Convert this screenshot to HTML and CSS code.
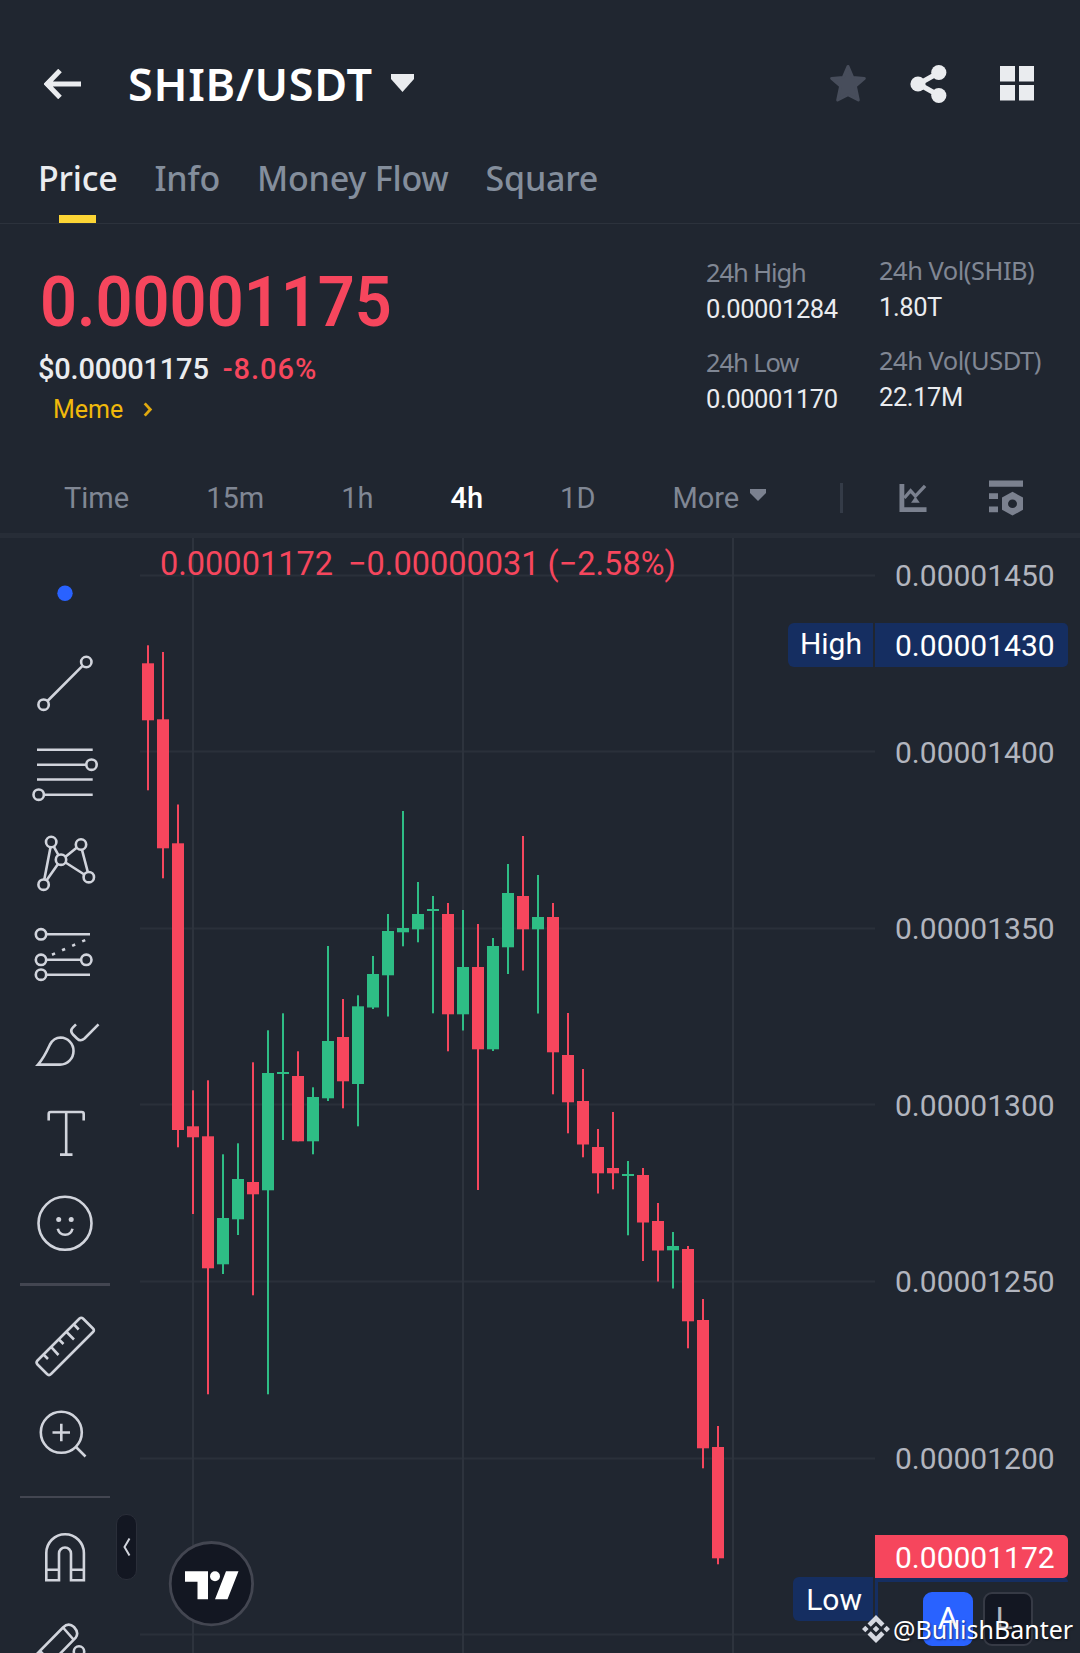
FILE: index.html
```
<!DOCTYPE html>
<html lang="en">
<head>
    <meta charset="UTF-8">
    <meta name="viewport" content="width=device-width, initial-scale=1.0">
    <title>SHIB/USDT</title>
    <link rel="stylesheet" href="styles.css">
</head>
<body>
    <header class="header">
        <svg class="back" width="37" height="30" viewBox="0 0 37 30"><path d="M16 1.500 3 15l13 13.500M4 15h33" fill="none" stroke="#eaecef" stroke-width="5"/><path d="M0 15 7 8v14z" fill="#eaecef"/></svg>
        <h1>SHIB/USDT</h1>
        <svg class="caret" width="24" height="19" viewBox="0 0 24 19"><path d="M0 0h23v5L11.500 18 0 5z" fill="#eaecef"/></svg>
        <div class="actions">
            <svg width="38" height="39" viewBox="0 0 38 40"><path d="M19 2.500l4.800 11.200 12 1-9.200 8 3 14.300L19 31.500 8.400 37l3-14.300-9.200-8 12-1z" fill="#474d5b" stroke="#474d5b" stroke-width="3" stroke-linejoin="round"/></svg>
            <svg width="37" height="40" viewBox="0 0 37 40"><path d="M29 8.500 8.500 20 29 31.500" fill="none" stroke="#eaecef" stroke-width="5"/><g fill="#eaecef"><circle cx="28.800" cy="8.500" r="7.600"/><circle cx="8" cy="20" r="7.600"/><circle cx="28.800" cy="31.500" r="7.600"/></g></svg>
            <svg width="34" height="35" viewBox="0 0 34 35"><path d="M0 0h15v15.500H0zM19 0h15v15.500H19zM0 19h15v15.500H0zM19 19h15v15.500H19z" fill="#eaecef"/></svg>
        </div>
    </header>

    <nav class="tabs">
        <a class="tab active">Price</a>
        <a class="tab">Info</a>
        <a class="tab">Money Flow</a>
        <a class="tab">Square</a>
    </nav>

    <section class="summary">
        <div class="ticker">
            <div class="last-price">0.00001175</div>
            <div class="fiat"><span class="fiat-price">$0.00001175</span><span class="change">-8.06%</span></div>
            <div class="tag">Meme <svg width="10" height="15" viewBox="0 0 10 16"><path d="M1.500 1.500 7.500 8l-6 6.500" fill="none" stroke="#e0a90f" stroke-width="3"/></svg></div>
        </div>
        <div class="stats">
            <dl>
                <dt>24h High</dt>
                <dd>0.00001284</dd>
                <dt>24h Low</dt>
                <dd>0.00001170</dd>
            </dl>
            <dl class="volume">
                <dt>24h Vol(SHIB)</dt>
                <dd>1.80T</dd>
                <dt>24h Vol(USDT)</dt>
                <dd>22.17M</dd>
            </dl>
        </div>
    </section>

    <div class="periods">
        <span>Time</span>
        <span>15m</span>
        <span>1h</span>
        <span class="selected">4h</span>
        <span>1D</span>
        <span class="more">More <svg width="16" height="12" viewBox="0 0 16 12"><path d="M0 0h16v4L8 12 0 4z" fill="#7b818f"/></svg></span>
        <div class="chart-options">
            <i class="divider"></i>
            <svg width="28" height="28" viewBox="0 0 28 29"><g fill="none" stroke="#7b818f"><path d="M2.500 0v26.500H28" stroke-width="5"/><path d="M5 14.500 11.500 7l5 5.500L26.500 2" stroke-width="3.500"/></g><path d="M16.500 13 21 19.500h-9z" fill="#7b818f"/></svg>
            <svg width="34" height="36" viewBox="0 0 34 38" preserveAspectRatio="none"><path d="M0 .5h34V7H0zM0 14h9v6H0zM0 28h9v6H0z" fill="#7b818f"/><path d="M23.500 12.500 34 18.500v13l-10.500 6-10.500-6v-13z" fill="#7b818f"/><circle cx="23.500" cy="25" r="4.500" fill="#202630"/></svg>
        </div>
    </div>

    <main class="chart">
        <aside class="toolbar">
            <svg class="tool" viewBox="0 0 130 90"><circle class="dot" cx="65" cy="45.300" r="7.700"/></svg>
            <svg class="tool" viewBox="0 0 130 90"><path d="M47.500 63 82.500 27.800"/><circle cx="86.300" cy="24" r="5.200"/><circle cx="43.600" cy="66.700" r="5.200"/></svg>
            <svg class="tool" viewBox="0 0 130 90"><path d="M37 21.700h55.700M37 36.700h49M37 51.500h55.700M44 66.700h48.700"/><circle cx="91.500" cy="36.700" r="5.200"/><circle cx="38.700" cy="66.700" r="5.200"/></svg>
            <svg class="tool" viewBox="0 0 130 90"><path d="M53.800 28.600 58.400 37M65.500 38.800 76.600 29.800M82 31.800 87.800 54M65.500 44.500 84.300 56.500M58 46 46.600 62.300M50.500 29.300 44.300 61.500"/><circle cx="51.200" cy="24" r="5.200"/><circle cx="61" cy="41.700" r="5.200"/><circle cx="81" cy="26.500" r="5.200"/><circle cx="88.800" cy="59.200" r="5.200"/><circle cx="43.600" cy="66.700" r="5.200"/></svg>
            <svg class="tool" viewBox="0 0 130 90"><path d="M46 26.300h44M46 51.800h35M46 66.700h44"/><path d="M52 46.700 87 31.300" stroke-dasharray="3.300 7.700"/><circle cx="41" cy="26.300" r="5.200"/><circle cx="41" cy="51.800" r="5.200"/><circle cx="86.300" cy="51.800" r="5.200"/><circle cx="41" cy="66.700" r="5.200"/></svg>
            <svg class="tool" viewBox="0 0 130 90"><path d="M38 66.600C44 60 47 53 50 46.500c2.500-4.500 6-7 10.500-7A13.300 13.300 0 0 1 73.500 53c0 7.500-6 13.600-13.500 13.600zM76 26.300l-3 3q-3.500 3.500 0 7.200l4 4q3.500 3.500 7.500 0l14-14.200"/></svg>
            <svg class="tool" viewBox="0 0 130 90"><path d="M48.700 32.500V26q0-2 2-2h31q2 0 2 2v6.500M66.200 24v42.500M60 66.600h12.500"/></svg>
            <svg class="tool" viewBox="0 0 130 90"><circle cx="65" cy="45.300" r="26.500"/><path d="M57.800 50.700c2 8 12.700 8 14.700 0"/><circle class="eye" cx="58.700" cy="41.500" r="2.500"/><circle class="eye" cx="71.200" cy="41.500" r="2.500"/></svg>
            <hr>
            <svg class="tool" viewBox="0 0 130 90"><path d="M79.500 17.500q1.800-1.500 3.500 0L93 27.500q1.800 1.800 0 3.500L51 73q-2 2-4 0L37.500 63.500q-2-2 0-4zM43.500 53.500l4.500 4.500M51.300 46.200l7.200 7.800M59 38.500l4.500 4.500M66.600 31l7.400 7.500M74 23.500l4.700 5"/></svg>
            <svg class="tool" viewBox="0 0 130 90"><circle cx="61.300" cy="41.300" r="20.500"/><path d="M52.500 41.500H70M61.300 32.700v17.600M76 56l9.500 9.500"/></svg>
            <hr>
            <svg class="tool" viewBox="0 0 130 90"><path d="M46.300 68.300V41a18.800 18.800 0 0 1 37.600 0v27.300H71V41.500a6 6 0 0 0-12 0v26.800zM46 57.700h13M71 57.700h13"/></svg>
            <svg class="tool" viewBox="0 0 130 90"><path d="M31 58 63 25.500q5.500-5.500 11-.5 5.500 6 1.500 11L50 62M63 25.500l10.500 12M40 49l4 4"/><circle cx="79" cy="49.500" r="5.200"/></svg>
            <div class="collapse"><svg width="8" height="18" viewBox="0 0 8 18"><path d="M6.500.5 1.500 9l5 8.500" fill="none" stroke="#d1d4dc" stroke-width="2"/></svg></div>
        </aside>

        <div class="plot">
            <svg id="candles" width="735" height="1115" viewBox="140 538 735 1115"></svg>
            <div class="legend"><span>0.00001172</span><span>−0.00000031 (−2.58%)</span></div>
            <svg class="tv-logo" width="86" height="86" viewBox="0 0 86 86"><circle cx="43.400" cy="42.700" r="41.200" fill="#131722" stroke="#434651" stroke-width="2.800"/><path d="M17 30.300H40V58.300H29.500V40.800H17zM58 30.300h12.500L59.500 58.300H47z" fill="#fff"/><circle cx="47" cy="35.300" r="5" fill="#fff"/></svg>
            <span class="flag flag-high">High</span>
            <span class="flag flag-low">Low</span>
        </div>

        <div class="axis">
            <span>0.00001450</span>
            <span>0.00001400</span>
            <span>0.00001350</span>
            <span>0.00001300</span>
            <span>0.00001250</span>
            <span>0.00001200</span>
            <div class="price-box high">0.00001430</div>
            <div class="price-box low"></div>
            <div class="price-box last">0.00001172</div>
            <div class="scale-modes">
                <span class="mode on">A</span>
                <span class="mode">L</span>
            </div>
        </div>
    </main>

    <div class="watermark">
        <svg width="28" height="28" viewBox="0 0 28 28"><path d="M14 0l8.500 8.500-3.300 3.300L14 6.600l-5.200 5.200-3.300-3.300zM14 28l8.500-8.500-3.300-3.300L14 21.400l-5.200-5.200-3.300 3.300zM14 10.700l3.300 3.300-3.300 3.300-3.300-3.300zM3.300 10.700 6.600 14l-3.300 3.300L0 14zM24.700 10.700 28 14l-3.300 3.300-3.300-3.300z" fill="#d5d8e0"/></svg>
        <span>@BullishBanter</span>
    </div>

    <script>
        const UP = '#2ebd85';
        const DOWN = '#f6465d';

        // [direction, wick top, body top, body bottom, wick bottom]
        const candles = [
            [0, 645.3, 663.3, 720.3, 790.3], [0, 652, 719.3, 848.3, 878.3], [0, 804.5, 843.3, 1130, 1147.3],
            [0, 1090.3, 1126.3, 1137.3, 1214], [0, 1080.3, 1136.3, 1268.3, 1394.3], [1, 1154.3, 1218, 1264.3, 1274],
            [1, 1143.3, 1179, 1219.3, 1235], [0, 1062.3, 1182, 1194.3, 1295.3], [1, 1030.3, 1073, 1190.3, 1394.3],
            [1, 1013.3, 1072, 1074, 1140], [0, 1051.3, 1076, 1141.3, 1141.3], [1, 1087.3, 1097, 1141.3, 1154.3],
            [1, 946, 1041, 1098.3, 1101], [0, 999, 1037, 1081.3, 1108.3], [1, 995.3, 1006.3, 1084, 1126.3],
            [1, 956, 974, 1007.5, 1009], [1, 914, 931, 975.3, 1016.5], [1, 811, 928, 932.3, 946.3],
            [1, 882, 914, 929.3, 942.3], [1, 896, 909, 911, 1013.3], [0, 903, 914, 1014.3, 1051.3],
            [1, 910, 967, 1014.3, 1030.5], [0, 924, 967, 1049.3, 1190], [1, 938, 946, 1049.3, 1051],
            [1, 864, 893, 947.3, 974], [0, 836, 896, 929.3, 970.5], [1, 875, 917, 929.3, 1013.5],
            [0, 903, 917, 1052.3, 1094.3], [0, 1013, 1055, 1102.3, 1133.3], [0, 1069, 1101, 1144.5, 1157.3],
            [0, 1129, 1147, 1173.3, 1193.5], [0, 1112, 1168, 1173.3, 1189.3], [1, 1161, 1174, 1176, 1235.3],
            [0, 1168, 1175, 1222.5, 1261], [0, 1203, 1221, 1250.5, 1281.5], [1, 1232, 1246, 1250.3, 1288.5],
            [0, 1246, 1249, 1321.3, 1348.3], [0, 1299, 1320, 1448.3, 1468.3], [0, 1426, 1447, 1558.3, 1564.3]
        ];

        let shapes = '';
        [575.5, 751.5, 928.5, 1104.5, 1281.5, 1458.5, 1634.5].forEach(y => {
            shapes += `<rect x="140" y="${y - 1}" width="735" height="2" fill="#2a303a"/>`;
        });
        [193, 463, 733].forEach(x => {
            shapes += `<rect x="${x - 1}" y="533" width="2" height="1120" fill="#2d333d"/>`;
        });
        candles.forEach(([up, high, top, bottom, low], i) => {
            const x = 142 + i * 15;
            const color = up ? UP : DOWN;
            shapes += `<rect x="${x + 5}" y="${high}" width="2" height="${low - high}" fill="${color}"/>`;
            shapes += `<rect x="${x}" y="${top}" width="12" height="${bottom - top}" fill="${color}"/>`;
        });
        document.getElementById('candles').innerHTML = shapes;
    </script>
</body>
</html>
```

FILE: styles.css
```
* {
    margin: 0;
    padding: 0;
    box-sizing: border-box;
}

body {
    position: relative;
    width: 1080px;
    height: 1653px;
    overflow: hidden;
    background: #202630;
    color: #eaecef;
    font-family: Roboto, sans-serif;
}

svg {
    display: block;
    flex: none;
}

.header {
    display: flex;
    align-items: center;
    height: 122px;
    padding: 45px 46px 0 44px;
}

h1 {
    margin-left: 47px;
    color: #fff;
    font: 600 45px/76px "Noto Sans", sans-serif;
    letter-spacing: 0.7px;
}

.caret {
    margin-left: 18px;
}

.actions {
    display: flex;
    align-items: center;
    margin-left: auto;
}

.actions svg + svg {
    margin-left: 43px;
}

.actions svg:last-child {
    margin-left: 53px;
}

.tabs {
    display: flex;
    gap: 37px;
    height: 102px;
    padding: 23px 38px 0;
    border-bottom: 1px solid #2c323c;
    font: 500 34px/66px "Noto Sans", sans-serif;
    letter-spacing: -0.2px;
    color: #848e9c;
}

.tab.active {
    position: relative;
    color: #eaecef;
}

.tab.active::after {
    content: "";
    position: absolute;
    left: 21px;
    bottom: 0;
    width: 37px;
    height: 8px;
    background: #fcd535;
}

.summary {
    display: flex;
    justify-content: space-between;
    height: 239px;
    padding-left: 38px;
}

.ticker {
    padding-top: 38px;
}

.last-price {
    margin-left: 2px;
    color: #f6465d;
    font-size: 70.5px;
    font-weight: 600;
    line-height: 80px;
    transform: scaleX(0.92);
    transform-origin: left;
}

.fiat {
    display: flex;
    gap: 14px;
    font-size: 29px;
    font-weight: 500;
    line-height: 54px;
}

.fiat-price {
    letter-spacing: -0.2px;
}

.change {
    color: #f6465d;
    letter-spacing: 1px;
}

.tag {
    display: flex;
    align-items: center;
    gap: 20px;
    margin-left: 15px;
    color: #f0b90b;
    font-size: 25px;
    line-height: 27px;
}

.stats {
    display: flex;
    width: 374px;
    padding-top: 30px;
    font-size: 25.5px;
}

.stats dl {
    width: 173px;
    white-space: nowrap;
}

.stats .volume {
    margin-top: -2px;
}

.stats dt {
    color: #808794;
    font-family: "Noto Sans", sans-serif;
    letter-spacing: -1.1px;
    line-height: 37px;
}

.stats .volume dt {
    letter-spacing: -0.5px;
}

.stats dd {
    margin-bottom: 17px;
    letter-spacing: -0.4px;
    line-height: 36px;
}

.periods {
    display: flex;
    align-items: center;
    gap: 77px;
    height: 75px;
    padding: 0 57px 0 64px;
    border-bottom: 5px solid #272d37;
    color: #808794;
    font-size: 29px;
}

.periods .selected {
    color: #fff;
    font-weight: 500;
}

.more {
    display: flex;
    align-items: center;
    gap: 11px;
    margin-right: -20px;
}

.more svg {
    margin-top: -6px;
}

.chart-options {
    display: flex;
    align-items: center;
    gap: 62px;
    margin-left: auto;
}

.divider {
    width: 3px;
    height: 30px;
    margin-right: -6px;
    background: #343b47;
}

.chart {
    display: flex;
    height: 1115px;
}

.toolbar {
    position: relative;
    width: 140px;
    padding-top: 10px;
}

.tool {
    width: 130px;
    height: 90px;
    fill: none;
    stroke: #d1d4dc;
    stroke-width: 2.6;
}

.tool .dot {
    fill: #2962ff;
    stroke: none;
}

.tool .eye {
    fill: #d1d4dc;
    stroke: none;
}

.toolbar hr {
    width: 90px;
    height: 3px;
    margin: 15px 20px;
    border: 0;
    background: #434651;
}

.toolbar hr + .tool + .tool + hr {
    margin: 15px 20px 14px;
    height: 2px;
}

.collapse {
    position: absolute;
    left: 116px;
    top: 976px;
    display: flex;
    align-items: center;
    justify-content: center;
    width: 21px;
    height: 66px;
    border: 1px solid #2a2e39;
    border-radius: 10px;
    background: #131722;
}

.plot {
    position: relative;
    width: 735px;
}

.legend {
    position: absolute;
    left: 20px;
    top: 6px;
    display: flex;
    gap: 15px;
    color: #f6465d;
    font-size: 32.5px;
    line-height: 40px;
}

.tv-logo {
    position: absolute;
    left: 28px;
    top: 1003px;
}

.flag {
    position: absolute;
    right: 2px;
    height: 44px;
    padding: 0 11px 0 12px;
    border-radius: 6px 0 0 6px;
    background: #152e61;
    color: #fff;
    font-size: 30px;
    line-height: 42px;
}

.flag-high {
    top: 85px;
}

.flag-low {
    top: 1039px;
    padding-left: 13px;
    line-height: 45px;
}

.axis {
    position: relative;
    display: flex;
    flex-direction: column;
    gap: 141.6px;
    width: 205px;
    padding: 20px 0 0 20px;
    color: #b2b5be;
    font-size: 30px;
    line-height: 35px;
}

.price-box {
    position: absolute;
    left: 0;
    width: 193px;
    height: 44px;
    padding-left: 20px;
    border-radius: 0 5px 5px 0;
    background: #152e61;
    color: #fff;
    line-height: 45px;
}

.price-box.high {
    top: 85px;
}

.price-box.low {
    top: 1039px;
}

.price-box.last {
    top: 997px;
    height: 43px;
    background: #f6465d;
}

.scale-modes {
    position: absolute;
    left: 3px;
    top: 1044px;
    display: flex;
    gap: 10px;
    width: 202px;
    height: 71px;
    padding: 10px 45px 0;
    background: #202630;
}

.mode {
    width: 50px;
    height: 54px;
    border: 2px solid #363a45;
    border-radius: 9px;
    background: #131722;
    color: #b2b5be;
    font-size: 32px;
    line-height: 48px;
    text-align: center;
    padding-right: 8px;
}

.mode.on {
    padding: 0;
    border-color: #2962ff;
    background: #2962ff;
    color: #fff;
}

.watermark {
    position: absolute;
    left: 862px;
    top: 1609px;
    display: flex;
    align-items: center;
    gap: 3px;
    color: #fff;
    font: 25px/40px "Noto Sans", sans-serif;
    text-shadow: 1px 1px 2px rgba(0, 0, 0, 0.5);
}
```
